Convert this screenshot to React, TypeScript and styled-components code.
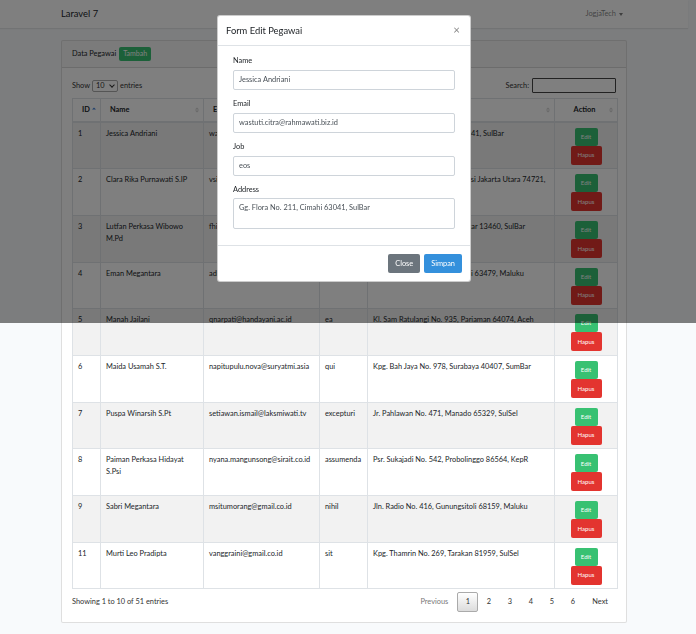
import React from 'react';
import styled, { createGlobalStyle } from 'styled-components';

const GlobalStyle = createGlobalStyle`
  html, body {
    margin: 0;
    padding: 0;
    background: #f8fafc;
  }
  body {
    font-family: Lato, "Open Sans", sans-serif;
    font-size: 7.4px;
    line-height: 1.6;
    color: #212529;
  }
  * {
    box-sizing: border-box;
  }
`;

const Page = styled.div`
  width: 688px;
  min-height: 634px;
`;

const Navbar = styled.nav`
  height: 28px;
  background: #fff;
  box-shadow: 0 1px 1px rgba(0, 0, 0, 0.08);
`;

const Container = styled.div`
  width: 566px;
  margin: 0 auto;
`;

const NavInner = styled(Container)`
  height: 100%;
  display: flex;
  align-items: center;
  justify-content: space-between;
`;

const Brand = styled.span`
  font-size: 9.4px;
  color: #212529;
`;

const UserMenu = styled.span`
  font-size: 7.4px;
  color: rgba(0, 0, 0, 0.5);
  margin-right: 4px;
  display: flex;
  align-items: center;
  gap: 3px;
  &::after {
    content: '';
    border-top: 3px solid rgba(0, 0, 0, 0.5);
    border-left: 2.5px solid transparent;
    border-right: 2.5px solid transparent;
  }
`;

const Main = styled.main`
  padding-top: 12px;
`;

const Card = styled(Container)`
  background: #fff;
  border: 1px solid rgba(0, 0, 0, 0.125);
  border-radius: 2px;
`;

const CardHeader = styled.div`
  height: 27px;
  padding: 0 10px;
  display: flex;
  align-items: center;
  gap: 3px;
  background: rgba(0, 0, 0, 0.03);
  border-bottom: 1px solid rgba(0, 0, 0, 0.125);
`;

const SmallButton = styled.span`
  display: inline-flex;
  align-items: center;
  height: 14px;
  padding: 0 4px;
  font-size: 7px;
  color: #fff;
  background: #38c172;
  border-radius: 2px;
`;

const CardBody = styled.div`
  padding: 10px;
`;

const Controls = styled.div`
  height: 15px;
  display: flex;
  align-items: center;
  justify-content: space-between;
  margin-bottom: 5px;
`;

const Length = styled.label`
  display: flex;
  align-items: center;
  gap: 2px;
  color: #333;
`;

const Select = styled.span`
  width: 26px;
  height: 12px;
  border: 1px solid #aaa;
  border-radius: 2px;
  display: flex;
  align-items: center;
  justify-content: space-between;
  padding: 0 3px;
  background: #fff;
  &::after {
    content: '';
    width: 3px;
    height: 3px;
    border-right: 1.4px solid #333;
    border-bottom: 1.4px solid #333;
    transform: translateY(-1px) rotate(45deg);
  }
`;

const SearchBox = styled.label`
  display: flex;
  align-items: center;
  gap: 3px;
  color: #333;
`;

const SearchInput = styled.span`
  width: 84px;
  height: 15px;
  border: 1px solid #444;
  border-radius: 1px;
  background: #fff;
`;

const Table = styled.table`
  width: 545px;
  border-collapse: collapse;
  table-layout: fixed;
  border: 1px solid #dee2e6;
  border-bottom: 1.5px solid #8a8a8a;
`;

const Th = styled.th<{ $center?: boolean }>`
  position: relative;
  height: 23px;
  padding: 0 12px 0 9px;
  text-align: ${(p) => (p.$center ? 'center' : 'left')};
  font-weight: 700;
  border: 1px solid #dee2e6;
  border-bottom: 2px solid #dee2e6;
`;

const SortIcon = styled.span<{ $active?: boolean }>`
  position: absolute;
  right: 4px;
  top: 50%;
  transform: translateY(-50%);
  display: flex;
  flex-direction: column;
  gap: 1px;
  &::before,
  &::after {
    content: '';
    border-left: 2px solid transparent;
    border-right: 2px solid transparent;
  }
  &::before {
    border-bottom: 2.5px solid ${(p) => (p.$active ? '#3f7fd6' : '#d0d0d0')};
  }
  &::after {
    border-top: 2.5px solid ${(p) => (p.$active ? 'transparent' : '#d0d0d0')};
  }
`;

const Tr = styled.tr`
  &:nth-child(odd) {
    background: #f2f2f2;
  }
`;

const Td = styled.td`
  padding: 5px 5px 4px;
  vertical-align: top;
  border: 1px solid #dee2e6;
`;

const ActionCell = styled(Td)`
  padding: 5px 0 3.7px;
  text-align: center;
`;

const ActionButton = styled.span<{ $danger?: boolean }>`
  display: flex;
  align-items: center;
  justify-content: center;
  margin: 0 auto;
  width: ${(p) => (p.$danger ? '31px' : '23px')};
  height: ${(p) => (p.$danger ? '19px' : '18px')};
  font-size: 6px;
  color: #fff;
  background: ${(p) => (p.$danger ? '#e3342f' : '#38c172')};
  border-radius: 2px;
`;

const Footer = styled.div`
  display: flex;
  align-items: center;
  justify-content: space-between;
  margin-top: 3px;
  color: #333;
`;

const Pager = styled.div`
  display: flex;
  align-items: center;
  margin-right: -1px;
`;

const PageLink = styled.span<{ $current?: boolean; $disabled?: boolean; $text?: boolean }>`
  min-width: 21px;
  height: 20px;
  padding: ${(p) => (p.$text ? '0 8px' : '0')};
  display: flex;
  align-items: center;
  justify-content: center;
  color: ${(p) => (p.$disabled ? '#777' : '#333')};
  border: 1px solid ${(p) => (p.$current ? '#aaa' : 'transparent')};
  border-radius: 2px;
  background: ${(p) => (p.$current ? 'linear-gradient(#fff, #dcdcdc)' : 'transparent')};
`;

const Backdrop = styled.div`
  position: fixed;
  left: 0;
  top: 0;
  width: 100%;
  height: 323px;
  background: rgba(0, 0, 0, 0.5);
  z-index: 10;
`;

const Modal = styled.div`
  position: fixed;
  left: 217px;
  top: 15px;
  width: 254px;
  background: #fff;
  border: 1px solid rgba(0, 0, 0, 0.2);
  border-radius: 3px;
  z-index: 20;
`;

const ModalHeader = styled.div`
  height: 30px;
  padding: 0 8px;
  display: flex;
  align-items: center;
  justify-content: space-between;
  border-bottom: 1px solid #dee2e6;
`;

const ModalTitle = styled.span`
  font-size: 9.4px;
`;

const CloseX = styled.span`
  font-size: 11.5px;
  color: #888;
  margin-right: 2px;
`;

const ModalBody = styled.div`
  padding: 9px 15px 8px;
`;

const FormGroup = styled.div`
  margin-bottom: 8px;
`;

const Label = styled.div`
  margin-bottom: 3px;
`;

const Input = styled.div<{ $tall?: boolean }>`
  height: ${(p) => (p.$tall ? '31px' : '20px')};
  padding: ${(p) => (p.$tall ? '3px 5px' : '0 5px')};
  display: flex;
  align-items: ${(p) => (p.$tall ? 'flex-start' : 'center')};
  color: #495057;
  border: 1px solid #ced4da;
  border-radius: 2px;
`;

const ModalFooter = styled.div`
  padding: 8px;
  display: flex;
  justify-content: flex-end;
  gap: 4px;
  border-top: 1px solid #dee2e6;
`;

const FooterButton = styled.span<{ $primary?: boolean }>`
  height: 19px;
  padding: 0 7px;
  display: flex;
  align-items: center;
  color: #fff;
  background: ${(p) => (p.$primary ? '#3490dc' : '#6c757d')};
  border-radius: 2px;
`;

const rows = [
  ['1', 'Jessica Andriani', 'wastuti.citra@rahmawati.biz.id', 'eos', 'Gg. Flora No. 211, Cimahi 63041, SulBar'],
  ['2', 'Clara Rika Purnawati S.IP', 'vsihombing@yahoo.com', 'et', 'Jr. Kebonjati No. 8, Administrasi Jakarta Utara 74721, KalSel'],
  ['3', 'Lutfan Perkasa Wibowo M.Pd', 'fhidayat@yahoo.co.id', 'quia', 'Ds. Raya Setiabudhi No. 7, Blitar 13460, SulBar'],
  ['4', 'Eman Megantara', 'adriansyah.ina@gmail.com', 'sed', 'Jln. Gajah Mada No. 50, Bekasi 63479, Maluku'],
  ['5', 'Manah Jailani', 'qnarpati@handayani.ac.id', 'ea', 'Kl. Sam Ratulangi No. 935, Pariaman 64074, Aceh'],
  ['6', 'Maida Usamah S.T.', 'napitupulu.nova@suryatmi.asia', 'qui', 'Kpg. Bah Jaya No. 978, Surabaya 40407, SumBar'],
  ['7', 'Puspa Winarsih S.Pt', 'setiawan.ismail@laksmiwati.tv', 'excepturi', 'Jr. Pahlawan No. 471, Manado 65329, SulSel'],
  ['8', 'Paiman Perkasa Hidayat S.Psi', 'nyana.mangunsong@sirait.co.id', 'assumenda', 'Psr. Sukajadi No. 542, Probolinggo 86564, KepR'],
  ['9', 'Sabri Megantara', 'msitumorang@gmail.co.id', 'nihil', 'Jln. Radio No. 416, Gunungsitoli 68159, Maluku'],
  ['11', 'Murti Leo Pradipta', 'vanggraini@gmail.co.id', 'sit', 'Kpg. Thamrin No. 269, Tarakan 81959, SulSel'],
];

const App: React.FC = () => {
  return (
    <Page>
      <GlobalStyle />
      <Navbar>
        <NavInner>
          <Brand>Laravel 7</Brand>
          <UserMenu>JogjaTech</UserMenu>
        </NavInner>
      </Navbar>

      <Main>
        <Card>
          <CardHeader>
            Data Pegawai <SmallButton>Tambah</SmallButton>
          </CardHeader>
          <CardBody>
            <Controls>
              <Length>
                Show <Select>10</Select> entries
              </Length>
              <SearchBox>
                Search: <SearchInput />
              </SearchBox>
            </Controls>

            <Table>
              <colgroup>
                <col style={{ width: 28 }} />
                <col style={{ width: 103 }} />
                <col style={{ width: 116 }} />
                <col style={{ width: 48 }} />
                <col style={{ width: 187 }} />
                <col style={{ width: 63 }} />
              </colgroup>
              <thead>
                <tr>
                  <Th>
                    ID <SortIcon $active />
                  </Th>
                  <Th>
                    Name <SortIcon />
                  </Th>
                  <Th>
                    Email <SortIcon />
                  </Th>
                  <Th>
                    Job <SortIcon />
                  </Th>
                  <Th>
                    Address <SortIcon />
                  </Th>
                  <Th $center>
                    Action <SortIcon />
                  </Th>
                </tr>
              </thead>
              <tbody>
                {rows.map((r) => (
                  <Tr key={r[0]}>
                    <Td>{r[0]}</Td>
                    <Td>{r[1]}</Td>
                    <Td>{r[2]}</Td>
                    <Td>{r[3]}</Td>
                    <Td>{r[4]}</Td>
                    <ActionCell>
                      <ActionButton>Edit</ActionButton>
                      <ActionButton $danger>Hapus</ActionButton>
                    </ActionCell>
                  </Tr>
                ))}
              </tbody>
            </Table>

            <Footer>
              <span>Showing 1 to 10 of 51 entries</span>
              <Pager>
                <PageLink $text $disabled>
                  Previous
                </PageLink>
                <PageLink $current>1</PageLink>
                <PageLink>2</PageLink>
                <PageLink>3</PageLink>
                <PageLink>4</PageLink>
                <PageLink>5</PageLink>
                <PageLink>6</PageLink>
                <PageLink $text>Next</PageLink>
              </Pager>
            </Footer>
          </CardBody>
        </Card>
      </Main>

      <Backdrop />
      <Modal>
        <ModalHeader>
          <ModalTitle>Form Edit Pegawai</ModalTitle>
          <CloseX>×</CloseX>
        </ModalHeader>
        <ModalBody>
          <FormGroup>
            <Label>Name</Label>
            <Input>Jessica Andriani</Input>
          </FormGroup>
          <FormGroup>
            <Label>Email</Label>
            <Input>wastuti.citra@rahmawati.biz.id</Input>
          </FormGroup>
          <FormGroup>
            <Label>Job</Label>
            <Input>eos</Input>
          </FormGroup>
          <FormGroup>
            <Label>Address</Label>
            <Input $tall>Gg. Flora No. 211, Cimahi 63041, SulBar</Input>
          </FormGroup>
        </ModalBody>
        <ModalFooter>
          <FooterButton>Close</FooterButton>
          <FooterButton $primary>Simpan</FooterButton>
        </ModalFooter>
      </Modal>
    </Page>
  );
};

export default App;
